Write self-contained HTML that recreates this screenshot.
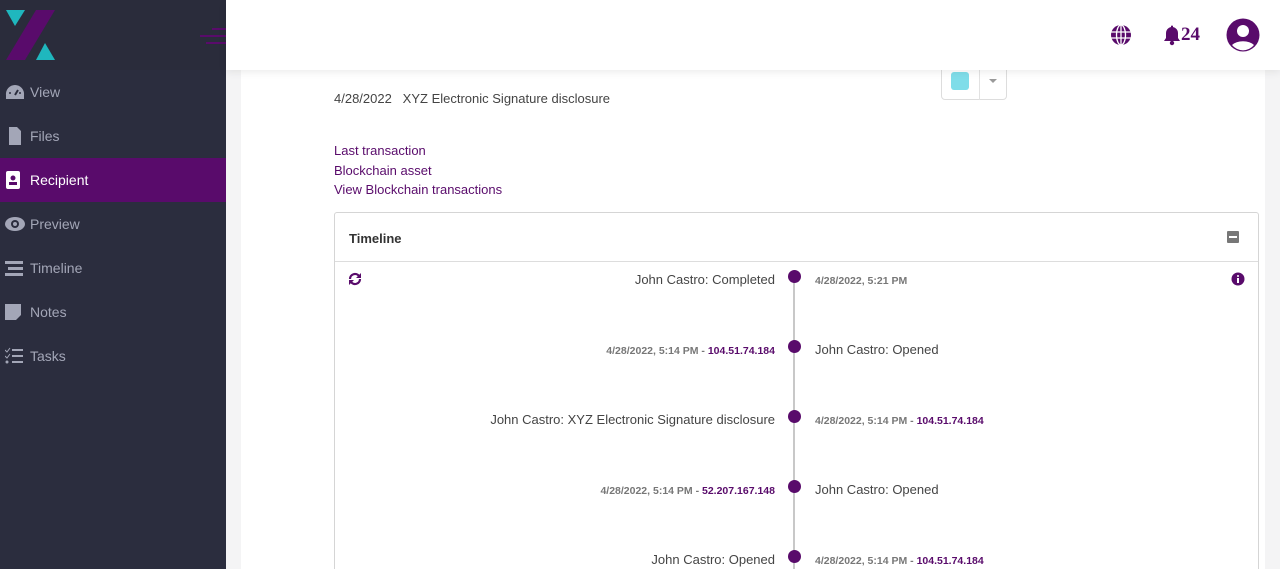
<!DOCTYPE html>
<html><head><style>
*{box-sizing:border-box;margin:0;padding:0}
html,body{width:1280px;height:569px;overflow:hidden}
body{background:#f4f4f5;font-family:"Liberation Sans",sans-serif;position:relative}
.side{position:absolute;left:0;top:0;width:226px;height:569px;background:#2b2d3e}
.logo{position:absolute;left:0;top:0;width:226px;height:70px;background:#2a2c3b}
.nav{position:absolute;left:0;width:226px;height:44px;color:#a3a6b7;font-size:14px;line-height:44px;padding-left:30px}
.nav.act{background:#590b6b;color:#fff}
.nav svg{position:absolute;left:5px;top:13px}
.hdr{position:absolute;left:226px;top:0;width:1054px;height:70px;background:#fff;box-shadow:0 2px 8px rgba(0,0,0,.08);z-index:2}
.card{position:absolute;left:241px;top:70px;width:1024px;height:499px;background:#fff}
.txt{position:absolute;font-size:13px;color:#444}
.lnk{position:absolute;left:334px;font-size:13px;color:#590b6b}
.panel{position:absolute;left:334px;top:212px;width:925px;height:370px;border:1px solid #d5d5d5;border-radius:3px}
.ph{height:49px;border-bottom:1px solid #ddd;font-weight:bold;font-size:13px;color:#333;padding:18px 0 0 14px}
.line{position:absolute;left:793px;top:276px;width:2px;height:300px;background:#c8c8c8}
.dot{position:absolute;left:788px;width:13px;height:13px;border-radius:50%;background:#590b6b}
.l{position:absolute;right:505px;font-size:13px;color:#444;text-align:right;white-space:nowrap}
.r{position:absolute;left:815px;font-size:13px;color:#444;white-space:nowrap}
.s{font-size:10.5px;font-weight:bold;color:#777}
.s b{color:#590b6b}
</style></head><body>
<div class="side">
<div class="logo">
<svg width="226" height="70"><polygon points="6,10 25,10 15,26" fill="#1fb7be"/><polygon points="36,10 55,10 25,60 6,60" fill="#590b6b"/><polygon points="36,60 55,60 45,43" fill="#1fb7be"/>
<rect x="212" y="28" width="14" height="2" fill="#590b6b"/><rect x="200" y="35" width="26" height="2" fill="#590b6b"/><rect x="206" y="42" width="20" height="2" fill="#590b6b"/></svg>
</div>
<div class="nav" style="top:70px"><svg width="20" height="18"><path d="M10 2A9 9 0 0 0 1 12v4h18v-4A9 9 0 0 0 10 2z" fill="#a3a6b7"/><path d="M10 12l3-5" stroke="#2b2d3e" stroke-width="2"/><circle cx="5" cy="10" r="1" fill="#2b2d3e"/><circle cx="15" cy="10" r="1" fill="#2b2d3e"/></svg>View</div>
<div class="nav" style="top:114px"><svg width="20" height="18"><path d="M4 0h8l4 4v14H4z" fill="#a3a6b7"/></svg>Files</div>
<div class="nav act" style="top:158px"><svg width="20" height="18"><rect x="1" y="0" width="14" height="18" rx="2" fill="#fff"/><circle cx="8" cy="7" r="2.5" fill="#590b6b"/><rect x="4" y="11" width="8" height="3" fill="#590b6b"/></svg>Recipient</div>
<div class="nav" style="top:202px"><svg width="22" height="18"><ellipse cx="10" cy="9" rx="10" ry="7" fill="#a3a6b7"/><circle cx="10" cy="9" r="4" fill="#2b2d3e"/><circle cx="10" cy="9" r="2" fill="#a3a6b7"/></svg>Preview</div>
<div class="nav" style="top:246px"><svg width="20" height="18"><rect x="0" y="2" width="18" height="3" fill="#a3a6b7"/><rect x="3" y="8" width="15" height="3" fill="#a3a6b7"/><rect x="0" y="14" width="18" height="3" fill="#a3a6b7"/></svg>Timeline</div>
<div class="nav" style="top:290px"><svg width="20" height="18"><path d="M0 1h16v11l-5 5H0z" fill="#a3a6b7"/></svg>Notes</div>
<div class="nav" style="top:334px"><svg width="20" height="18"><rect x="7" y="2" width="11" height="2" fill="#a3a6b7"/><rect x="7" y="8" width="11" height="2" fill="#a3a6b7"/><rect x="7" y="14" width="11" height="2" fill="#a3a6b7"/><circle cx="2" cy="15" r="1.5" fill="#a3a6b7"/><path d="M0 3l2 2 3-4M0 9l2 2 3-4" stroke="#a3a6b7" fill="none"/></svg>Tasks</div>
</div>
<div class="hdr">
<svg style="position:absolute;left:885px;top:25px" width="20" height="20" viewBox="0 0 20 20"><circle cx="10" cy="10" r="10" fill="#590b6b"/><path d="M0 7h20M0 13h20M10 0v20" stroke="#fff" stroke-width="1.3"/><ellipse cx="10" cy="10" rx="4.5" ry="10" stroke="#fff" stroke-width="1.3" fill="none"/></svg>
<svg style="position:absolute;left:936px;top:25px" width="20" height="21"><path d="M9 1a1.5 1.5 0 0 1 2 0v1a6 6 0 0 1 5 6v5l2 3H2l2-3V8a6 6 0 0 1 5-6z" fill="#590b6b"/><circle cx="10" cy="18" r="2.2" fill="#590b6b"/></svg>
<div style="position:absolute;left:955px;top:24px;font-family:'Liberation Serif',serif;font-weight:bold;font-size:19px;color:#590b6b">24</div>
<svg style="position:absolute;left:1000px;top:18px" width="34" height="34" viewBox="0 0 34 34"><circle cx="17" cy="17" r="16.5" fill="#590b6b"/><circle cx="17" cy="13" r="6" fill="#fff"/><path d="M6 27a13 8 0 0 1 22 0a14 14 0 0 1-22 0z" fill="#fff"/></svg>
</div>
<div class="card"></div>
<div style="position:absolute;left:941px;top:62px;width:66px;height:38px;border:1px solid #ddd;border-radius:4px;background:#fff"></div>
<div style="position:absolute;left:951px;top:72px;width:18px;height:18px;border-radius:3px;background:#7fdde9"></div>
<div style="position:absolute;left:979px;top:70px;width:1px;height:30px;background:#e2e2e2"></div>
<div style="position:absolute;left:989px;top:79px;border:4px solid transparent;border-top:4px solid #999"></div>
<div class="txt" style="left:334px;top:91px">4/28/2022&nbsp;&nbsp;&nbsp;XYZ Electronic Signature disclosure</div>
<div class="lnk" style="top:143px">Last transaction</div>
<div class="lnk" style="top:163px">Blockchain asset</div>
<div class="lnk" style="top:182px">View Blockchain transactions</div>
<div class="panel"><div class="ph">Timeline</div></div>
<div style="position:absolute;left:1227px;top:231px;width:12px;height:12px;background:#777;border-radius:1px"><div style="margin:5px 2px 0;height:2px;background:#fff"></div></div>
<svg style="position:absolute;left:348px;top:272px" width="14" height="14" viewBox="0 0 14 14"><path d="M2 7a5 5 0 0 1 9-3M12 7a5 5 0 0 1-9 3" stroke="#590b6b" stroke-width="2.2" fill="none"/><path d="M13 1v5H8zM1 13V8h5z" fill="#590b6b"/></svg>
<svg style="position:absolute;left:1231px;top:272px" width="14" height="14"><circle cx="7" cy="7" r="6.5" fill="#590b6b"/><rect x="6" y="6" width="2" height="5" fill="#fff"/><circle cx="7" cy="4" r="1" fill="#fff"/></svg>
<div class="line"></div>
<div class="dot" style="top:270px"></div><div class="dot" style="top:340px"></div><div class="dot" style="top:410px"></div><div class="dot" style="top:480px"></div><div class="dot" style="top:550px"></div>
<div class="l" style="top:272px">John Castro: Completed</div>
<div class="r s" style="top:275px">4/28/2022, 5:21 PM</div>
<div class="l s" style="top:345px">4/28/2022, 5:14 PM - <b>104.51.74.184</b></div>
<div class="r" style="top:342px">John Castro: Opened</div>
<div class="l" style="top:412px">John Castro: XYZ Electronic Signature disclosure</div>
<div class="r s" style="top:415px">4/28/2022, 5:14 PM - <b>104.51.74.184</b></div>
<div class="l s" style="top:485px">4/28/2022, 5:14 PM - <b>52.207.167.148</b></div>
<div class="r" style="top:482px">John Castro: Opened</div>
<div class="l" style="top:552px">John Castro: Opened</div>
<div class="r s" style="top:555px">4/28/2022, 5:14 PM - <b>104.51.74.184</b></div>
</body></html>
